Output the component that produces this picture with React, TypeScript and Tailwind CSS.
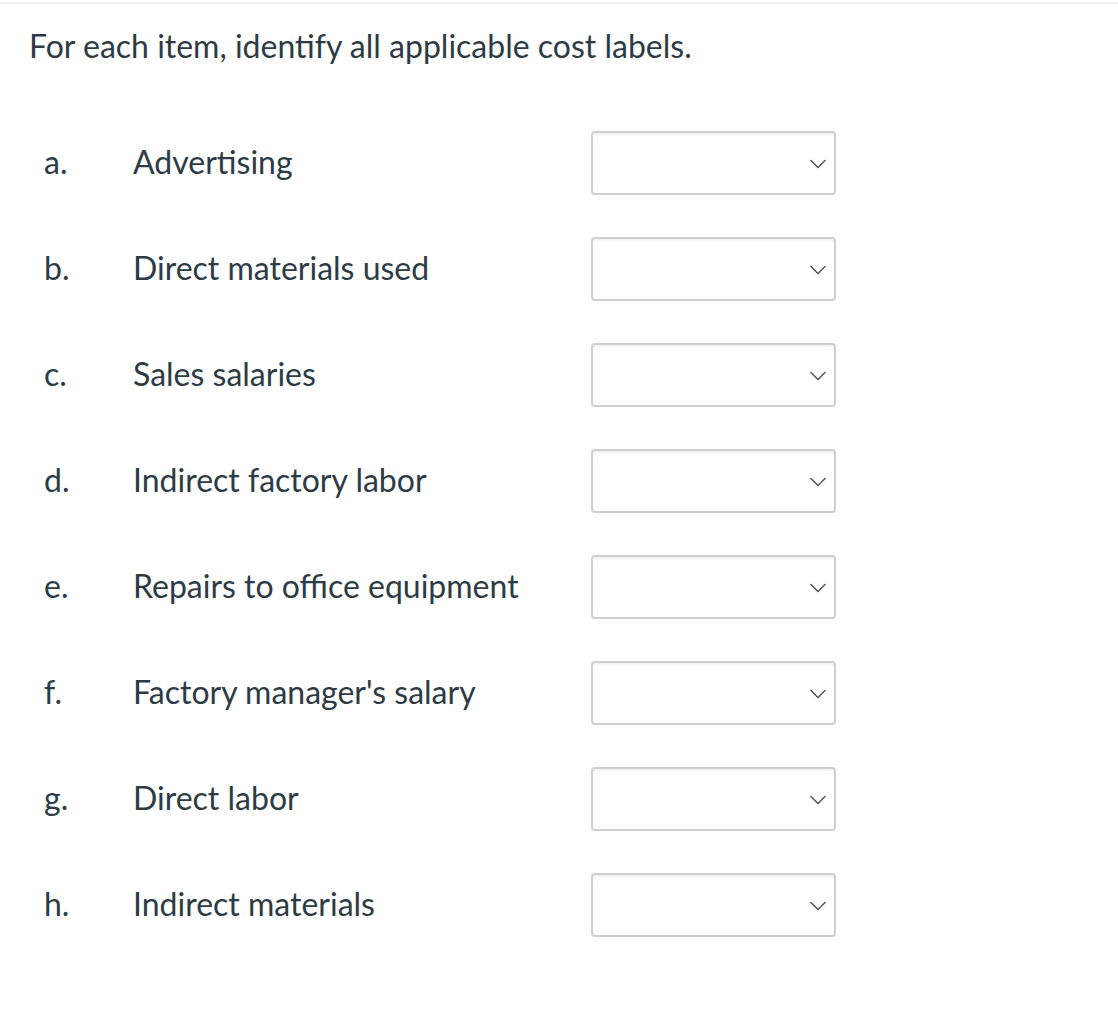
import React from "react";

const items: [string, string][] = [
  ["a.", "Advertising"],
  ["b.", "Direct materials used"],
  ["c.", "Sales salaries"],
  ["d.", "Indirect factory labor"],
  ["e.", "Repairs to office equipment"],
  ["f.", "Factory manager's salary"],
  ["g.", "Direct labor"],
  ["h.", "Indirect materials"],
];

function Select() {
  return (
    <div className="relative w-[245px] h-[64px] rounded-[4px] border-2 border-[#cfcfcf] bg-white shadow-[inset_0_2px_2px_rgba(0,0,0,0.06)]">
      <svg
        className="absolute right-[8px] top-[26px]"
        width="16"
        height="10"
        viewBox="0 0 16 10"
        fill="none"
      >
        <path d="M1 1.5 L8 8.5 L15 1.5" stroke="#555" strokeWidth="1.5" strokeLinecap="round" strokeLinejoin="round" />
      </svg>
    </div>
  );
}

export default function App() {
  return (
    <div className="min-h-[1022px] w-[1118px] bg-white text-[#2d3b45] font-['Lato',sans-serif]">
      <div className="pt-[2px]">
        <div className="h-[2px] bg-[#f0f0f0]" />
      </div>
      <h1 className="pl-[29px] pt-[22px] text-[32px] leading-[40px] font-normal">
        For each item, identify all applicable cost labels.
      </h1>
      <div className="mt-[65px] flex flex-col gap-[42px]">
        {items.map(([k, label]) => (
          <div key={k} className="flex items-center h-[64px]">
            <div className="w-[133px] pl-[44px] text-[32px] leading-[40px] -mt-[2px]">{k}</div>
            <div className="w-[458px] text-[32px] leading-[40px] -mt-[2px]">{label}</div>
            <Select />
          </div>
        ))}
      </div>
    </div>
  );
}
